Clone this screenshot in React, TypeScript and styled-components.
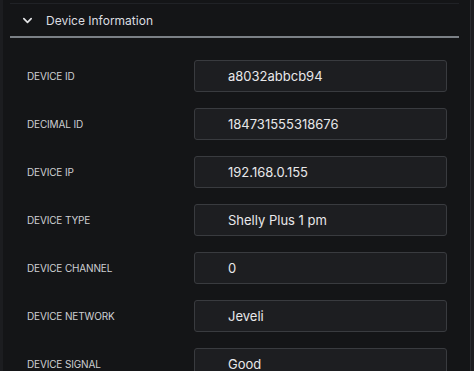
import styled, { createGlobalStyle } from 'styled-components';

const GlobalStyle = createGlobalStyle`
  html, body {
    margin: 0;
    padding: 0;
    background: #1c1d20;
    height: 100%;
    overflow: hidden;
  }
  body {
    font-family: Inter, "Noto Sans", "Liberation Sans", sans-serif;
    -webkit-font-smoothing: antialiased;
  }
`;

const Frame = styled.div`
  height: 371px;
  padding-left: 3px;
  display: flex;
`;

const Panel = styled.div`
  width: 467px;
  height: 100%;
  background: #141517;
  border-right: 1px solid #2a2c30;
  display: flex;
  flex-direction: column;
  overflow: hidden;
`;

const SectionHeader = styled.div`
  flex: none;
  margin: 3px 11px 0 7px;
  height: 32px;
  border-top: 1px solid #202226;
  border-bottom: 2px solid #7b8086;
  display: flex;
  align-items: center;
  gap: 13px;
  padding-left: 12px;
  color: #dcdde0;
  font-size: 12px;
`;

const Chevron = styled.svg`
  width: 11px;
  height: 11px;
  flex: none;
`;

const Fields = styled.div`
  flex: none;
  display: flex;
  flex-direction: column;
  gap: 16px;
  padding: 22px 0 0 24px;
`;

const Row = styled.div`
  display: grid;
  grid-template-columns: 167px 253px;
  align-items: center;
`;

const Label = styled.span`
  font-size: 10px;
  color: #cfd0d3;
  letter-spacing: -0.15px;
  text-transform: uppercase;
`;

const Value = styled.div`
  box-sizing: border-box;
  height: 32px;
  border: 1px solid #393b3f;
  border-radius: 3px;
  background: #1d1e21;
  display: flex;
  align-items: center;
  padding-left: 33px;
  color: #e8e8ea;
  font-size: 13px;
`;

const fields = [
  { label: 'Device ID', value: 'a8032abbcb94' },
  { label: 'Decimal ID', value: '184731555318676' },
  { label: 'Device IP', value: '192.168.0.155' },
  { label: 'Device Type', value: 'Shelly Plus 1 pm' },
  { label: 'Device Channel', value: '0' },
  { label: 'Device Network', value: 'Jeveli' },
  { label: 'Device Signal', value: 'Good' },
];

export default function App() {
  return (
    <>
      <GlobalStyle />
      <Frame>
        <Panel>
          <SectionHeader>
            <Chevron viewBox="0 0 12 12">
              <path d="M2 4l4 4 4-4" fill="none" stroke="#e4e5e7" strokeWidth="1.8" strokeLinecap="round" strokeLinejoin="round" />
            </Chevron>
            Device Information
          </SectionHeader>
          <Fields>
            {fields.map((f) => (
              <Row key={f.label}>
                <Label>{f.label}</Label>
                <Value>{f.value}</Value>
              </Row>
            ))}
          </Fields>
        </Panel>
      </Frame>
    </>
  );
}
